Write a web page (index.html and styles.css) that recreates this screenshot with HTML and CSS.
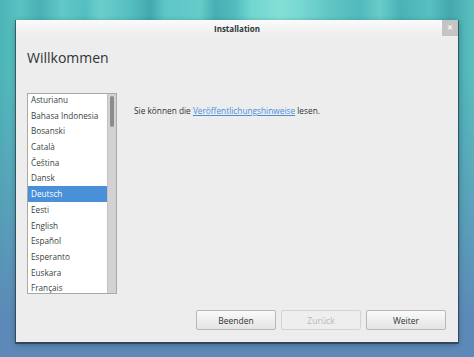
FILE: index.html
```html
<!DOCTYPE html>
<html lang="de">
<head>
  <meta charset="UTF-8">
  <title>Installation</title>
  <link rel="stylesheet" href="styles.css">
</head>
<body>
  <!-- Installer Window -->
  <div class="window">
    <div class="titlebar">
      <span class="title">Installation</span>
      <button class="close-button">&#x2715;</button>
    </div>

    <div class="content">
      <h1 class="heading">Willkommen</h1>

      <div class="main-row">
        <!-- Language List -->
        <div class="language-list">
          <ul class="languages">
            <li>Asturianu</li>
            <li>Bahasa Indonesia</li>
            <li>Bosanski</li>
            <li>Català</li>
            <li>Čeština</li>
            <li>Dansk</li>
            <li class="selected">Deutsch</li>
            <li>Eesti</li>
            <li>English</li>
            <li>Español</li>
            <li>Esperanto</li>
            <li>Euskara</li>
            <li>Français</li>
          </ul>
          <div class="scrollbar"><div class="thumb"></div></div>
        </div>

        <p class="notes">Sie können die <a href="#">Veröffentlichungshinweise</a> lesen.</p>
      </div>

      <!-- Buttons -->
      <div class="actions">
        <button class="action-button">Beenden</button>
        <button class="action-button" disabled>Zurück</button>
        <button class="action-button">Weiter</button>
      </div>
    </div>
  </div>
</body>
</html>
```

FILE: styles.css
```css
* {
  margin: 0;
  padding: 0;
  box-sizing: border-box;
}

body {
  width: 474px;
  height: 357px;
  overflow: hidden;
  font-family: 'Open Sans', 'DejaVu Sans', sans-serif;
  color: #2e3436;
  background:
    linear-gradient(to bottom, rgba(94, 140, 186, 0) 0%, rgba(94, 140, 186, 0) 20%, rgba(94, 138, 184, 0.55) 60%, #5c89b7 90%),
    linear-gradient(to right,
      #4cb4b6 0px, #5ac2c2 20px, #4ab0b4 40px, #62c8c8 62px, #54bec0 85px,
      #6ccecc 100px, #56bfc0 130px, #44a8ae 150px, #5ec6c6 165px, #66ccca 200px,
      #48b0b4 215px, #52bbbe 235px, #70d6d0 250px, #84e0d6 280px, #78d8d2 300px,
      #60c6c4 330px, #52babc 360px, #68ccca 380px, #4ab2b6 400px, #58c0c0 430px,
      #44a8ae 450px, #5ac0c0 474px);
  padding: 20px 0 0 16px;
}

/* Window */
.window {
  width: 442px;
  height: 322px;
  background: #ededed;
  display: flex;
  flex-direction: column;
  box-shadow: 0 1px 0 1px rgba(30, 40, 50, 0.55), 0 2px 6px rgba(0, 0, 0, 0.35);
}

.titlebar {
  position: relative;
  height: 17px;
  display: flex;
  justify-content: center;
  align-items: center;
  background: linear-gradient(to bottom, #fbfbfb, #ededed);
}

.title {
  font-size: 8px;
  font-weight: bold;
  color: #2e3436;
}

.close-button {
  position: absolute;
  top: 0;
  right: 0;
  width: 16px;
  height: 16px;
  border: none;
  background: #c4c4c4;
  color: #fafafa;
  font-size: 7px;
  font-weight: bold;
  display: flex;
  justify-content: center;
  align-items: center;
}

.content {
  flex: 1;
  display: flex;
  flex-direction: column;
  padding: 12px 12px 12px 11px;
}

.heading {
  font-size: 14px;
  font-weight: normal;
  line-height: 18px;
  color: #2e3436;
  margin-bottom: 26px;
}

.main-row {
  flex: 1;
  display: flex;
  align-items: flex-start;
}

/* Language List */
.language-list {
  width: 90px;
  height: 201px;
  display: flex;
  border: 1px solid #a9a9a9;
  background: #ffffff;
  overflow: hidden;
}

.languages {
  list-style: none;
  flex: 1;
  margin-top: -2px;
}

.languages li {
  height: 15.7px;
  line-height: 15.7px;
  font-size: 8.2px;
  padding-left: 3px;
  white-space: nowrap;
  color: #3a3f41;
}

.languages li.selected {
  background: #4a90d9;
  color: #ffffff;
}

.scrollbar {
  width: 9px;
  background: #d2d2d2;
  border-left: 1px solid #c4c4c4;
  padding: 2px 2px 0 2px;
}

.thumb {
  height: 31px;
  background: #8c8c8c;
  border-radius: 2px;
}

.notes {
  font-size: 8.3px;
  margin-left: 17px;
  margin-top: 12px;
}

.notes a {
  color: #4a90d9;
}

/* Buttons */
.actions {
  display: flex;
  justify-content: flex-end;
  gap: 5px;
}

.action-button {
  width: 80px;
  height: 20px;
  font-family: inherit;
  font-size: 8.5px;
  color: #2e3436;
  border: 1px solid #b8b8b8;
  border-radius: 2px;
  background: linear-gradient(to bottom, #fafafa, #e4e4e4);
}

.action-button:disabled {
  color: #b8b8b8;
  border-color: #d4d4d4;
  background: #eeeeee;
}
```
